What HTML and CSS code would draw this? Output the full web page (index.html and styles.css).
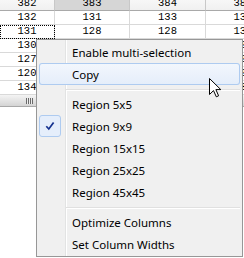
FILE: index.html
```html
<!DOCTYPE html>
<html>
<head>
<meta charset="utf-8">
<link rel="stylesheet" href="styles.css">
</head>
<body>
<div class="view">
  <div class="table">
    <div class="cell hd">382</div><div class="cell hd sel">383</div><div class="cell hd">384</div><div class="cell hd">385</div>
    <div class="cell">132</div><div class="cell">131</div><div class="cell">133</div><div class="cell">132</div>
    <div class="cell focus">131</div><div class="cell">128</div><div class="cell">128</div><div class="cell">130</div>
    <div class="cell">130</div><div class="cell">129</div><div class="cell">127</div><div class="cell">128</div>
    <div class="cell">127</div><div class="cell">125</div><div class="cell">126</div><div class="cell">124</div>
    <div class="cell">120</div><div class="cell">122</div><div class="cell">121</div><div class="cell">123</div>
    <div class="cell">134</div><div class="cell">133</div><div class="cell">131</div><div class="cell">130</div>
  </div>
  <div class="hscroll"><div class="grip"></div></div>
</div>

<div class="menu">
  <div class="item"><span class="mark"></span><span class="label">Enable multi-selection</span></div>
  <div class="item hot"><span class="mark"></span><span class="label">Copy</span></div>
  <div class="sep"><div class="line"></div></div>
  <div class="item"><span class="mark"></span><span class="label">Region 5x5</span></div>
  <div class="item"><span class="mark on"><svg width="10" height="10" viewBox="0 0 10 10"><path d="M1.3 5.2 L3.8 8 L8.6 1.4" fill="none" stroke="#14318f" stroke-width="1.7"/></svg></span><span class="label">Region 9x9</span></div>
  <div class="item"><span class="mark"></span><span class="label">Region 15x15</span></div>
  <div class="item"><span class="mark"></span><span class="label">Region 25x25</span></div>
  <div class="item"><span class="mark"></span><span class="label">Region 45x45</span></div>
  <div class="sep"><div class="line"></div></div>
  <div class="item"><span class="mark"></span><span class="label">Optimize Columns</span></div>
  <div class="item"><span class="mark"></span><span class="label">Set Column Widths</span></div>
</div>

<svg class="cursor" width="13" height="20" viewBox="0 0 13 20"><path d="M0.5 0.5 L0.5 16.5 L4.5 12.6 L7.3 18.8 L9.6 17.8 L6.9 11.6 L11.8 11.6 Z" fill="#fff" stroke="#000" stroke-width="1" stroke-linejoin="miter"/></svg>
</body>
</html>
```
FILE: styles.css
```css
html, body {
  margin: 0;
  padding: 0;
  background: #fff;
}
body {
  width: 244px;
  height: 258px;
  overflow: hidden;
  position: relative;
}
.view {
  width: 244px;
  overflow: hidden;
}
.table {
  display: grid;
  grid-template-columns: 55px 75px 76px 75px;
  width: max-content;
}
.cell {
  box-sizing: border-box;
  height: 14px;
  border-right: 1px solid #d9d9d9;
  border-bottom: 1px solid #d9d9d9;
  font-family: "Liberation Mono", monospace;
  font-size: 10.5px;
  line-height: 13px;
  text-align: center;
  color: #000;
}
.cell.hd {
  height: 11px;
  display: flex;
  align-items: flex-end;
  justify-content: center;
  line-height: 11px;
  padding-bottom: 1px;
  background: linear-gradient(#f7f7f7, #f0f0f0);
  border-right: 1px solid #c8c8c8;
  border-bottom: 1px solid #a9a9a9;
}
.cell.hd.sel {
  background: #d6d6d6;
}
.cell.focus {
  outline: 1px dotted #000;
  outline-offset: -1px;
}
.hscroll {
  box-sizing: border-box;
  height: 12px;
  display: flex;
  align-items: center;
  padding-left: 26px;
  background: linear-gradient(#f4f4f4, #e4e4e4 50%, #d4d4d4);
  border-bottom: 1px solid #a8a8a8;
}
.grip {
  width: 7px;
  height: 6px;
  background: repeating-linear-gradient(to right, #6a6a6a 0 1px, #ececec 1px 2px);
}
.menu {
  position: absolute;
  left: 36px;
  top: 39px;
  width: 207px;
  box-sizing: border-box;
  border: 1px solid #979797;
  padding: 1px 2px;
  background:
    linear-gradient(to right, transparent 28px, #e2e3e3 28px, #e2e3e3 29px, #ffffff 29px, #ffffff 30px, transparent 30px),
    #f0f0f0;
  font-family: "Noto Sans", sans-serif;
  font-size: 11.5px;
  color: #000;
}
.item {
  height: 22px;
  display: flex;
  align-items: center;
}
.item.hot {
  border-radius: 3px;
  box-shadow: inset 0 0 0 1px #aecbf0;
  background: linear-gradient(#f3f7fd, #e4edfa);
}
.mark {
  flex: none;
  width: 22px;
  height: 22px;
  box-sizing: border-box;
}
.mark.on {
  display: flex;
  align-items: center;
  justify-content: center;
  border: 1px solid #aecbf0;
  border-radius: 3px;
  background: #e5eefb;
}
.label {
  margin-left: 11px;
  white-space: nowrap;
}
.sep {
  height: 8px;
  box-sizing: border-box;
  padding-top: 4px;
  margin-left: 27px;
}
.line {
  height: 1px;
  background: #e0e0e0;
  border-bottom: 1px solid #fff;
}
.cursor {
  position: absolute;
  left: 208.5px;
  top: 77.5px;
}
```
